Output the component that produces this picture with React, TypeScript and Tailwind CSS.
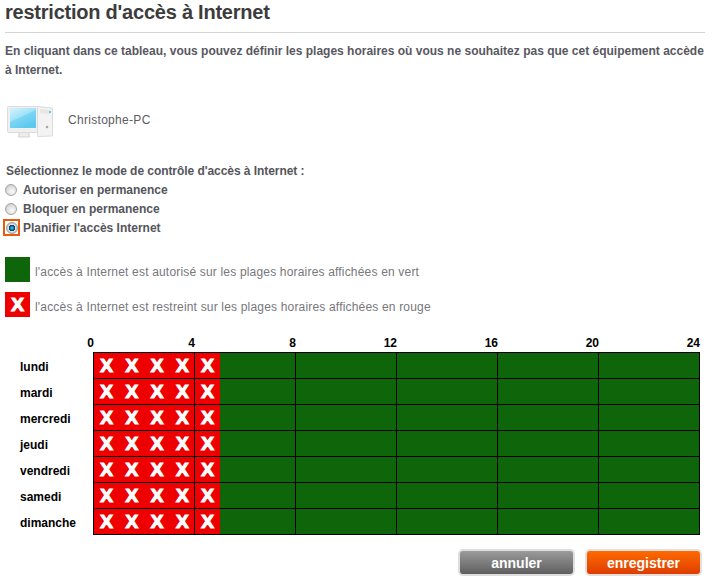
const days = ["lundi", "mardi", "mercredi", "jeudi", "vendredi", "samedi", "dimanche"];
const hours = [4, 8, 12, 16, 20, 24];

function Computer() {
  return (
    <svg width="48" height="36" viewBox="0 0 48 36" className="block">
      <defs>
        <linearGradient id="scr" x1="0" y1="0" x2="0.6" y2="1">
          <stop offset="0" stopColor="#d4f3fc" />
          <stop offset="0.5" stopColor="#9fe2f8" />
          <stop offset="0.52" stopColor="#7ed6f4" />
          <stop offset="1" stopColor="#5cc9ef" />
        </linearGradient>
      </defs>
      <path d="M12.5 29h9l1 6h-11z" fill="#ececec" stroke="#d2d2d2" />
      <rect x="0.5" y="4.5" width="30" height="26" rx="1" fill="#f0f0f0" stroke="#dcdcdc" />
      <rect x="3" y="6" width="26" height="20" fill="url(#scr)" />
      <path d="M30.5 4.5l15 1.5v28l-15 0.5z" fill="#f3f3f3" stroke="#dcdcdc" />
      <path d="M33 7l10 1v4l-10-1z" fill="#e6e6e6" />
      <rect x="42" y="9" width="2" height="2" fill="#5fcdf0" />
      <circle cx="40" cy="25" r="1.3" fill="#a8a8a8" />
    </svg>
  );
}

function Radio({ checked }: { checked?: boolean }) {
  return (
    <span
      className={
        checked
          ? "w-[12px] h-[12px] shrink-0 rounded-full border border-[#9a9a9a] bg-[radial-gradient(circle_closest-side_at_50%_50%,#6cc8f0_0%,#0a78b4_35%,#06304f_62%,#e4e4e4_70%,#c4c4c4_100%)] block"
          : "w-[12px] h-[12px] shrink-0 rounded-full border border-[#a5a5a5] bg-[radial-gradient(circle_at_60%_65%,#fafafa_0%,#dedede_55%,#bcbcbc_100%)] block"
      }
    />
  );
}

function Cross() {
  return <span className="text-white font-bold text-[19px] leading-none [-webkit-text-stroke:1.2px_#ffffff]">X</span>;
}

function Hour() {
  return (
    <span className="w-[25.25px] h-full flex items-center justify-center shrink-0">
      <Cross />
    </span>
  );
}

export default function App() {
  return (
    <div className="w-[715px] h-[584px] bg-white overflow-hidden font-['Liberation_Sans',Arial,sans-serif] text-[#55555c] text-[12px] relative">
      <h1 className="pl-[5px] h-[32px] text-[20px] leading-[24px] font-bold text-[#3c3c3c] tracking-[-0.23px]">
        restriction d'accès à Internet
      </h1>
      <div className="ml-[5px] mr-[10px] h-px bg-[#d4d4d4]" />
      <p className="pl-[5px] pt-[9px] w-[710px] font-bold leading-[19px] text-[#58585f]">
        En cliquant dans ce tableau, vous pouvez définir les plages horaires où vous ne souhaitez pas que cet équipement accède à Internet.
      </p>

      <div className="flex items-center pl-[7px] mt-[22px] h-[36px]">
        <Computer />
        <span className="ml-[13px] text-[#5c5c62] tracking-[0.3px]">Christophe-PC</span>
      </div>

      <p className="pl-[6px] mt-[24px] font-bold leading-[18px] tracking-[-0.06px]">Sélectionnez le mode de contrôle d'accès à Internet :</p>
      <div className="flex flex-col font-bold">
        <label className="flex items-center h-[19px] pl-[5px] gap-[6px]">
          <Radio />
          <span>Autoriser en permanence</span>
        </label>
        <label className="flex items-center h-[19px] pl-[5px] gap-[6px]">
          <Radio />
          <span>Bloquer en permanence</span>
        </label>
        <label className="flex items-center h-[19px] pl-[3px] gap-[3px]">
          <span className="w-[17px] h-[17px] border-2 border-[#ee5a0c] flex items-center justify-center shrink-0">
            <Radio checked />
          </span>
          <span>Planifier l'accès Internet</span>
        </label>
      </div>

      <div className="flex items-center pl-[5px] gap-[5px] mt-[20px] h-[25px] text-[#77777c] tracking-[0.18px]">
        <span className="w-[25px] h-[25px] bg-[#0f650a]" />
        <span className="pt-[4px]">l'accès à Internet est autorisé sur les plages horaires affichées en vert</span>
      </div>
      <div className="flex items-center pl-[5px] gap-[5px] mt-[10px] h-[25px] text-[#77777c] tracking-[0.18px]">
        <span className="w-[25px] h-[25px] bg-[#ee0000] flex items-center justify-center tracking-normal"><Cross /></span>
        <span className="pt-[4px]">l'accès à Internet est restreint sur les plages horaires affichées en rouge</span>
      </div>

      <div className="flex h-[18px] mt-[17px] text-black font-bold text-[12px] leading-[18px]">
        <span className="w-[94px] shrink-0 text-right">0</span>
        {hours.map((h) => (
          <span key={h} className="w-[101px] shrink-0 text-right">{h}</span>
        ))}
      </div>

      <div className="flex">
        <div className="w-[93px] pl-[20px] shrink-0 text-black font-bold">
          {days.map((d) => (
            <div key={d} className="h-[26px] leading-[31px]">{d}</div>
          ))}
        </div>
        <div className="w-[607px] h-[183px] border border-black bg-[#0f650a] flex flex-col shrink-0">
          {days.map((d, r) => (
            <div key={d} className={r < 6 ? "flex h-[26px] border-b border-black" : "flex h-[25px]"}>
              <div className="w-[101px] h-full flex border-r border-black bg-[#ee0000] overflow-hidden shrink-0">
                <Hour /><Hour /><Hour /><Hour />
              </div>
              <div className="w-[101px] h-full flex border-r border-black shrink-0">
                <div className="w-[25px] h-full bg-[#ee0000] flex"><Hour /></div>
              </div>
              <div className="w-[101px] border-r border-black shrink-0" />
              <div className="w-[101px] border-r border-black shrink-0" />
              <div className="w-[101px] border-r border-black shrink-0" />
              <div className="w-[101px] border-r border-black shrink-0" />
              <div className="flex-1" />
            </div>
          ))}
        </div>
      </div>

      <div className="flex justify-end gap-[10px] pr-[13px] mt-[14px]">
        <button className="w-[117px] h-[27px] rounded-[5px] border-2 border-[#dedede] bg-gradient-to-b from-[#9b9b9b] to-[#5f5f5f] text-white font-bold text-[14px] leading-none">
          annuler
        </button>
        <button className="w-[117px] h-[27px] rounded-[5px] border-2 border-[#e8dede] bg-gradient-to-b from-[#ff6a00] to-[#dd3d00] text-white font-bold text-[14px] leading-none">
          enregistrer
        </button>
      </div>
    </div>
  );
}
